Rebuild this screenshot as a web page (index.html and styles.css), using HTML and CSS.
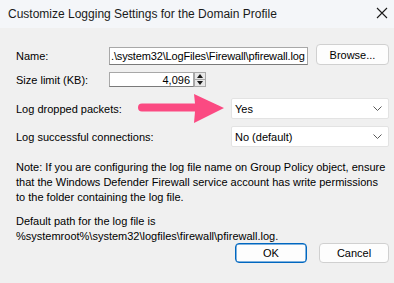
FILE: index.html
```html
<!DOCTYPE html>
<html>
<head>
<meta charset="utf-8">
<link rel="stylesheet" href="styles.css">
</head>
<body>
<div class="dialog">
  <div class="titlebar">
    <span class="title">Customize Logging Settings for the Domain Profile</span>
    <svg class="close" width="12" height="12" viewBox="0 0 12 12"><path d="M1 1L11 11M11 1L1 11" stroke="#1a1a1a" stroke-width="1.1" fill="none"/></svg>
  </div>
  <div class="content">
    <div class="row row-name">
      <span class="label lbl-name">Name:</span>
      <div class="textbox name-box"><span>.\system32\LogFiles\Firewall\pfirewall.log</span></div>
      <button class="btn browse">Browse...</button>
    </div>
    <div class="row row-size">
      <span class="label lbl-name">Size limit (KB):</span>
      <div class="textbox size-box">4,096</div>
      <div class="spin">
        <div class="spin-btn"><svg width="6" height="4" viewBox="0 0 6 4"><path d="M0 4L3 0L6 4Z" fill="#1a1a1a"/></svg></div>
        <div class="spin-btn"><svg width="6" height="4" viewBox="0 0 6 4"><path d="M0 0L3 4L6 0Z" fill="#1a1a1a"/></svg></div>
      </div>
    </div>
    <div class="row row-combo first">
      <span class="label grow">Log dropped packets:</span>
      <div class="combo"><span>Yes</span><svg width="9" height="5" viewBox="0 0 9 5"><path d="M0.5 0.5L4.5 4.5L8.5 0.5" stroke="#5a5a5a" fill="none" stroke-width="1"/></svg></div>
    </div>
    <div class="row row-combo">
      <span class="label grow">Log successful connections:</span>
      <div class="combo"><span>No (default)</span><svg width="9" height="5" viewBox="0 0 9 5"><path d="M0.5 0.5L4.5 4.5L8.5 0.5" stroke="#5a5a5a" fill="none" stroke-width="1"/></svg></div>
    </div>
    <p class="note">Note: If you are configuring the log file name on Group Policy object, ensure that the Windows Defender Firewall service account has write permissions to the folder containing the log file.</p>
    <p class="note path">Default path for the log file is<br>%systemroot%\system32\logfiles\firewall\pfirewall.log.</p>
    <div class="buttons">
      <button class="btn ok">OK</button>
      <button class="btn cancel">Cancel</button>
    </div>
  </div>
  <svg class="arrow" width="90" height="32" viewBox="0 0 90 32"><path d="M4 10.5H57L56 1L86 15L56 30L57 18.5H4A4 4 0 0 1 4 10.5Z" fill="#fb4a82"/></svg>
</div>
</body>
</html>
```
FILE: styles.css
```css
html, body {
  margin: 0;
  padding: 0;
}
body {
  width: 394px;
  height: 283px;
  background: #f0f0f0;
  font-family: "Liberation Sans", Arial, sans-serif;
  font-size: 11px;
  color: #000;
  overflow: hidden;
}
.dialog {
  position: relative;
  width: 394px;
  height: 283px;
}
.titlebar {
  height: 28px;
  background: #f4f6f9;
  display: flex;
  align-items: center;
  justify-content: space-between;
  padding: 0 6px 0 8px;
}
.title {
  font-size: 12px;
  color: #1a1a1a;
}
.close {
  margin-top: -2px;
}
.content {
  padding: 16px 5px 0 16px;
}
.row {
  display: flex;
  align-items: center;
}
.row-name {
  align-items: flex-end;
}
.row-name .label {
  align-self: center;
  padding-top: 3px;
}
.label {
  white-space: nowrap;
}
.lbl-name {
  width: 93px;
}
.grow {
  flex: 1;
}
.textbox {
  background: #fff;
  border: 1px solid #a8a8a8;
  border-bottom-color: #7a7a7a;
  box-sizing: border-box;
  white-space: nowrap;
  overflow: hidden;
  display: flex;
  align-items: center;
}
.name-box {
  width: 199px;
  height: 18px;
  padding-left: 1px;
  letter-spacing: -0.15px;
}
.btn {
  font-family: inherit;
  font-size: 11px;
  color: #000;
  background: #fdfdfd;
  border: 1px solid #d0d0d0;
  border-radius: 4px;
  box-sizing: border-box;
  height: 21px;
  padding: 0;
}
.browse {
  width: 73px;
  margin-left: 8px;
}
.row-size {
  margin-top: 7px;
}
.size-box {
  width: 85px;
  height: 15px;
  justify-content: flex-end;
  padding-right: 3px;
}
.spin {
  display: flex;
  flex-direction: column;
  border: 1px solid #a8a8a8;
  box-sizing: border-box;
  width: 12px;
  height: 15px;
  background: #e8e8e8;
}
.spin-btn {
  flex: 1;
  display: flex;
  align-items: center;
  justify-content: center;
}
.spin-btn + .spin-btn {
  border-top: 1px solid #a8a8a8;
}
.row-combo.first {
  margin-top: 11px;
}
.row-combo {
  margin-top: 7px;
}
.combo {
  width: 158px;
  height: 21px;
  box-sizing: border-box;
  background: #fff;
  border: 1px solid #e3e3e3;
  border-radius: 2px;
  display: flex;
  align-items: center;
  justify-content: space-between;
  padding: 0 6px 0 3px;
}
.note {
  margin: 13px 0 0 0;
  font-size: 11px;
  line-height: 15px;
  width: 370px;
}
.note.path {
  margin-top: 9px;
}
.buttons {
  display: flex;
  justify-content: flex-end;
  gap: 12px;
  margin-top: -1px;
}
.ok {
  width: 72px;
  height: 20px;
  border: 1px solid #0067c0;
  box-shadow: inset 0 0 0 0.5px #0067c0;
}
.cancel {
  width: 70px;
  height: 20px;
}
.arrow {
  position: absolute;
  left: 138px;
  top: 93px;
}
```
